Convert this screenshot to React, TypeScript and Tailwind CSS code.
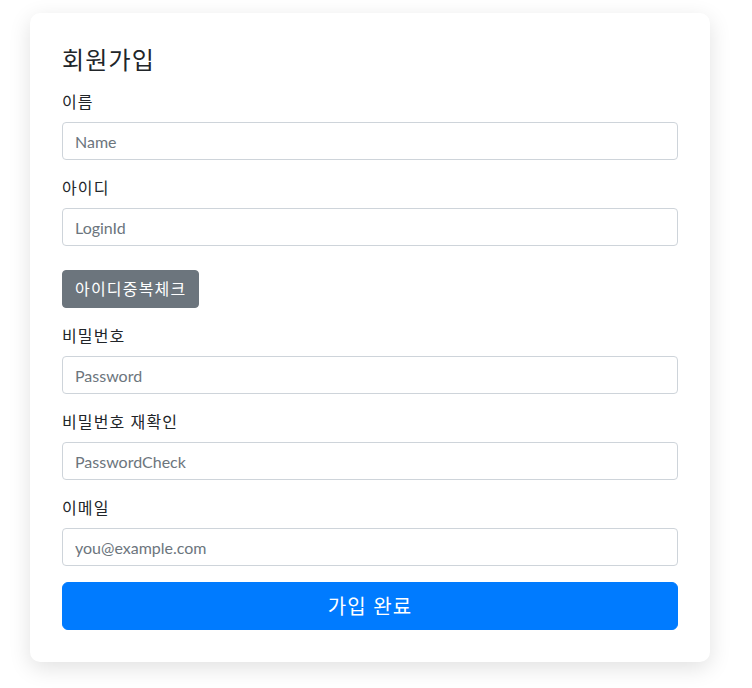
import * as React from 'react';

const fields = [
  { label: '이름', placeholder: 'Name', type: 'text' },
  { label: '아이디', placeholder: 'LoginId', type: 'text' },
];

const fields2 = [
  { label: '비밀번호', placeholder: 'Password', type: 'password' },
  { label: '비밀번호 재확인', placeholder: 'PasswordCheck', type: 'password' },
  { label: '이메일', placeholder: 'you@example.com', type: 'email' },
];

function Field({ label, placeholder, type }: { label: string; placeholder: string; type: string }) {
  return (
    <div className="mb-4">
      <label className="block mb-2 text-base leading-6 tracking-[0.07em] text-[#212529]">{label}</label>
      <input
        type={type}
        placeholder={placeholder}
        className="block w-full h-[38px] px-3 py-1.5 text-base leading-6 text-[#495057] bg-white border border-[#ced4da] rounded placeholder:text-[#6c757d] focus:outline-none"
      />
    </div>
  );
}

export default function App() {
  return (
    <div
      className="min-h-[688px] bg-white pt-[13px] pl-[30px]"
      style={{ fontFamily: 'Lato, "Noto Sans CJK KR", sans-serif' }}
    >
      <div className="w-[680px] bg-white rounded-[10px] p-8 shadow-[0_6px_22px_rgba(0,0,0,0.12)]">
        <h4 className="text-2xl leading-[29px] font-normal tracking-[0.05em] text-[#212529] mb-4">회원가입</h4>
        <form onSubmit={e => e.preventDefault()}>
          {fields.map(f => (
            <Field key={f.label} {...f} />
          ))}
          <button
            type="button"
            className="mt-2 mb-4 h-[38px] px-3 text-base leading-6 tracking-[0.075em] text-white bg-[#6c757d] border border-[#6c757d] rounded"
          >
            아이디중복체크
          </button>
          {fields2.map(f => (
            <Field key={f.label} {...f} />
          ))}
          <button
            type="submit"
            className="block w-full h-12 px-4 text-xl leading-[30px] tracking-[0.06em] text-white bg-[#007bff] border border-[#007bff] rounded-md"
          >
            가입 완료
          </button>
        </form>
      </div>
    </div>
  );
}
